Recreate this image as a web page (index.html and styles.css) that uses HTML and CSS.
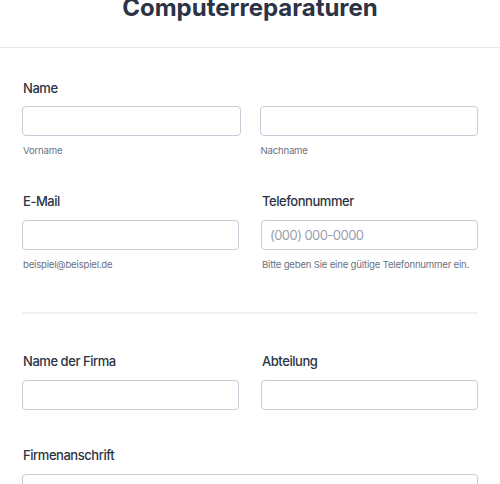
FILE: index.html
```html
<!DOCTYPE html>
<html lang="de">
<head>
<meta charset="utf-8">
<title>Computerreparaturen</title>
<link rel="stylesheet" href="styles.css">
</head>
<body>
<header class="form-header">
  <h1 class="form-title">Computerreparaturen</h1>
</header>
<main class="form-body">
  <section class="field-group">
    <div class="label">Name</div>
    <div class="row row-a">
      <div class="col">
        <input class="input" type="text">
        <div class="sublabel">Vorname</div>
      </div>
      <div class="col">
        <input class="input" type="text">
        <div class="sublabel">Nachname</div>
      </div>
    </div>
  </section>

  <section class="row row-b group-2">
    <div class="col">
      <div class="label">E-Mail</div>
      <input class="input" type="email">
      <div class="sublabel">beispiel@beispiel.de</div>
    </div>
    <div class="col">
      <div class="label">Telefonnummer</div>
      <input class="input" type="tel" placeholder="(000) 000-0000">
      <div class="sublabel">Bitte geben Sie eine gültige Telefonnummer ein.</div>
    </div>
  </section>

  <hr class="divider">

  <section class="row row-b group-3">
    <div class="col">
      <div class="label">Name der Firma</div>
      <input class="input" type="text">
    </div>
    <div class="col">
      <div class="label">Abteilung</div>
      <input class="input" type="text">
    </div>
  </section>

  <section class="group-4">
    <div class="label">Firmenanschrift</div>
    <input class="input" type="text">
  </section>
</main>
</body>
</html>
```

FILE: styles.css
```css
* { box-sizing: border-box; }
html, body {
  margin: 0;
  padding: 0;
  background: #ffffff;
  font-family: Inter, "Noto Sans", sans-serif;
  color: #2c3345;
  overflow: hidden;
}
.form-header {
  border-bottom: 1px solid #e6e7ef;
  padding-bottom: 23px;
  text-align: center;
}
.form-title {
  margin: -8px 0 0;
  font-size: 24px;
  line-height: 32px;
  font-weight: 700;
  color: #2c3345;
}
.form-body {
  padding: 31px 22px 0;
}
.label {
  font-size: 13px;
  line-height: 18px;
  font-weight: 500;
  letter-spacing: -0.45px;
  color: #2c3345;
  padding-left: 1px;
  margin-bottom: 9px;
}
.row {
  display: grid;
  grid-template-columns: 1fr 1fr;
}
.row-a { column-gap: 19px; }
.row-b { column-gap: 22px; }
.input {
  display: block;
  width: 100%;
  height: 30px;
  margin: 0;
  padding: 0 8px;
  border: 1px solid #c8ccd9;
  border-radius: 4px;
  background: #fff;
  font-family: Inter, "Noto Sans", sans-serif;
  font-size: 13px;
  font-weight: 400;
  letter-spacing: -0.55px;
  color: #2c3345;
  outline: none;
}
.input::placeholder { color: #9aa0b0; }
.sublabel {
  margin-top: 8px;
  font-size: 9.6px;
  line-height: 14px;
  letter-spacing: -0.2px;
  color: #6a7183;
  padding-left: 1px;
  white-space: nowrap;
}
.group-2 { margin-top: 34px; }
.group-2 .label { margin-bottom: 10px; }
.divider {
  margin: 40px 0 0;
  height: 2px;
  border: 0;
  background: #f3f3f7;
}
.group-3 { margin-top: 38px; }
.group-3 .label, .group-4 .label { margin-bottom: 10px; }
.group-4 { margin-top: 36px; }
```
